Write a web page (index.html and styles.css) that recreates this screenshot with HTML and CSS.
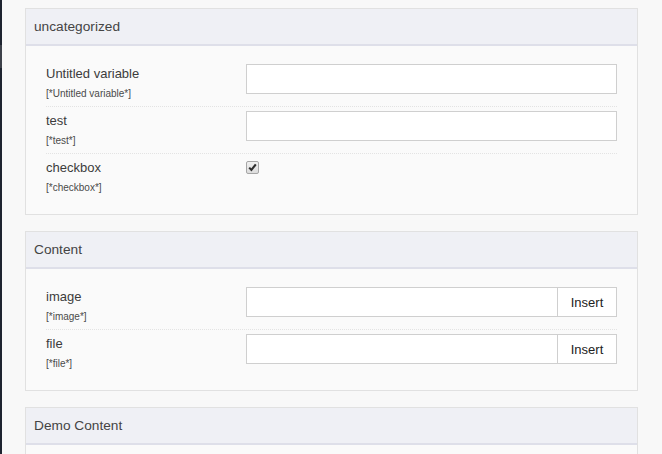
FILE: index.html
```html
<!DOCTYPE html>
<html>
<head>
<meta charset="utf-8">
<link rel="stylesheet" href="styles.css">
</head>
<body>
<div class="edge"><div class="edge-a"></div><div class="edge-b"></div><div class="edge-c"></div></div>
<main class="main">
  <section class="panel">
    <div class="panel-head">uncategorized</div>
    <div class="panel-body">
      <div class="row">
        <div class="label"><div class="name">Untitled variable</div><div class="tag">[*Untitled variable*]</div></div>
        <div class="field"><input class="text" type="text"></div>
      </div>
      <div class="row">
        <div class="label"><div class="name">test</div><div class="tag">[*test*]</div></div>
        <div class="field"><input class="text" type="text"></div>
      </div>
      <div class="row">
        <div class="label"><div class="name">checkbox</div><div class="tag">[*checkbox*]</div></div>
        <div class="field"><span class="check"><svg width="9" height="9" viewBox="0 0 9 9"><path d="M1.2 4.6 L3.4 7 L7.8 1.4" fill="none" stroke="#2e2e2e" stroke-width="2.1"/></svg></span></div>
      </div>
    </div>
  </section>
  <section class="panel">
    <div class="panel-head">Content</div>
    <div class="panel-body">
      <div class="row">
        <div class="label"><div class="name">image</div><div class="tag">[*image*]</div></div>
        <div class="field group"><input class="text joined" type="text"><button class="btn">Insert</button></div>
      </div>
      <div class="row">
        <div class="label"><div class="name">file</div><div class="tag">[*file*]</div></div>
        <div class="field group"><input class="text joined" type="text"><button class="btn">Insert</button></div>
      </div>
    </div>
  </section>
  <section class="panel">
    <div class="panel-head">Demo Content</div>
    <div class="panel-body"></div>
  </section>
</main>
</body>
</html>
```
FILE: styles.css
```css
html, body { margin: 0; padding: 0; }
body {
  background: #f8f8f8;
  font-family: "Liberation Sans", Arial, sans-serif;
  color: #333;
  display: flex;
  height: 454px;
  overflow: hidden;
}
.edge { width: 2px; display: flex; flex-direction: column; flex: none; }
.edge-a { height: 45px; background: #1e2430; }
.edge-b { height: 23px; background: #3d414a; }
.edge-c { flex: 1; background: #1e2430; }
.main { flex: 1; padding: 8px 24px 0 23px; }
.panel {
  border: 1px solid #e1e1e1;
  background: #fafafa;
  margin-bottom: 16px;
}
.panel-head {
  background: #eff0f5;
  border-bottom: 2px solid #dedfe9;
  height: 35px;
  line-height: 35px;
  padding: 0 8px;
  font-size: 13.7px;
  color: #444;
}
.panel-body { padding: 14px 20px; }
.row {
  display: flex;
  padding: 4px 0 6px;
  border-bottom: 1px dotted #e3e3e3;
}
.row:last-child { border-bottom: none; }
.label { width: 200px; flex: none; padding-top: 1px; margin-bottom: -1px; }
.name { font-size: 13px; line-height: 18px; color: #3c3c3c; }
.tag { font-size: 10px; line-height: 14px; margin-top: 4px; color: #4a4a4a; }
.field { flex: 1; display: flex; align-items: flex-start; }
.text {
  box-sizing: border-box;
  width: 100%;
  height: 30px;
  margin: 0;
  border: 1px solid #cfcfcf;
  background: #fff;
  padding: 0 6px;
  font: inherit;
}
.joined { flex: 1; width: auto; min-width: 0; }
.btn {
  box-sizing: border-box;
  height: 30px;
  width: 59px;
  margin: 0;
  border: 1px solid #cfcfcf;
  border-left: none;
  background: #fff;
  font-family: "Liberation Sans", Arial, sans-serif;
  font-size: 13px;
  color: #222;
  padding: 0;
}
.check {
  box-sizing: border-box;
  width: 13px;
  height: 13px;
  margin-top: 3px;
  border: 1px solid #a6a6a6;
  border-radius: 2px;
  background: linear-gradient(#f0f0f0, #dcdcdc);
  display: flex;
  align-items: center;
  justify-content: center;
}
.check svg { display: block; }
```
